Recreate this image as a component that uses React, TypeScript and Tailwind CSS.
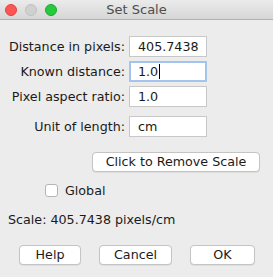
import React from "react";

const font = { fontFamily: '"DejaVu Sans", "Noto Sans", sans-serif' };

function Field({ value, focused }: { value: string; focused?: boolean }) {
  return (
    <div
      className={
        "w-[78px] h-[21px] bg-white flex items-center text-[12.7px] text-[#1a1a1a] " +
        (focused
          ? "border-2 border-[#a3c4ef] pl-[7px]"
          : "border border-[#c8c8c8] pl-[8px]")
      }
    >
      <span>{value}</span>
      {focused && <span className="w-px h-[15px] bg-black ml-[1px]" />}
    </div>
  );
}

function Row({ label, value, focused }: { label: string; value: string; focused?: boolean }) {
  return (
    <div className="flex items-center h-[21px]">
      <div className="w-[125px] text-right text-[12.7px] leading-[16px] text-[#1a1a1a]">{label}</div>
      <div className="ml-[4px]">
        <Field value={value} focused={focused} />
      </div>
    </div>
  );
}

function Btn({ children, w }: { children: React.ReactNode; w: string }) {
  return (
    <div
      className={
        "h-[20px] bg-white border border-[#c4c4c4] rounded-[4px] flex items-center justify-center text-[12.7px] leading-[16px] text-[#1a1a1a] shadow-[0_0.5px_0.5px_rgba(0,0,0,0.12)] " +
        w
      }
    >
      {children}
    </div>
  );
}

export default function App() {
  return (
    <div className="w-[273px] h-[277px] bg-[#ececec] flex flex-col" style={font}>
      <div className="h-[20px] shrink-0 flex items-center bg-gradient-to-b from-[#ebebeb] to-[#d6d6d6] border-b border-[#b1b1b1] relative">
        <div className="flex gap-[8px] pl-[5px]">
          <div className="w-[12px] h-[12px] rounded-full bg-[#fd5454] border border-[#e0443e]" />
          <div className="w-[12px] h-[12px] rounded-full bg-[#d0d0d0] border border-[#c0c0c0]" />
          <div className="w-[12px] h-[12px] rounded-full bg-[#27c93f] border border-[#1aab29]" />
        </div>
        <div className="absolute inset-0 flex items-center justify-center text-[13px] text-[#4d4d4d]">
          Set Scale
        </div>
      </div>

      <div className="flex flex-col pt-[16px] gap-[4px]">
        <Row label="Distance in pixels:" value="405.7438" />
        <Row label="Known distance:" value="1.0" focused />
        <Row label="Pixel aspect ratio:" value="1.0" />
        <div className="mt-[5px]">
          <Row label="Unit of length:" value="cm" />
        </div>
      </div>

      <div className="flex pl-[92px] mt-[15px]">
        <Btn w="w-[168px]">Click to Remove Scale</Btn>
      </div>

      <div className="flex items-center h-[13px] pl-[45px] mt-[12px]">
        <div className="w-[13px] h-[13px] bg-white border border-[#b5b5b5] rounded-[3px]" />
        <span className="ml-[7px] text-[12.7px] leading-[16px] text-[#1a1a1a]">Global</span>
      </div>

      <div className="pl-[8px] mt-[15px] h-[16px] text-[12.7px] leading-[16px] text-[#1a1a1a]">
        Scale: 405.7438 pixels/cm
      </div>

      <div className="flex pl-[19px] mt-[17px] gap-[18px]">
        <Btn w="w-[62px]">Help</Btn>
        <Btn w="w-[73px]">Cancel</Btn>
        <Btn w="w-[65px]">OK</Btn>
      </div>
    </div>
  );
}
